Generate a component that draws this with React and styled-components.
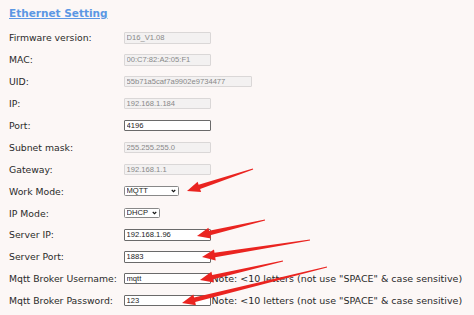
import React from 'react'
import styled, {createGlobalStyle} from 'styled-components'

const GlobalStyle = createGlobalStyle`
	html, body {
		margin: 0;
		padding: 0;
		background: #fcf7f6;
	}
	body {
		font-family: 'DejaVu Sans', Verdana, sans-serif;
		color: #2a2a2a;
	}
`

// Page

const Page = styled.div`
	position: relative;
	width: 474px;
	height: 315px;
	overflow: hidden;
	padding: 6px 0 0 9px;
	box-sizing: border-box;
`

const Title = styled.div`
	font-size: 10.5px;
	font-weight: bold;
	color: #5b97e4;
	text-decoration: underline;
	line-height: 14px;
	margin-bottom: 7px;
`

// Rows

const Form = styled.div`
	display: flex;
	flex-direction: column;
`

const Row = styled.div`
	display: flex;
	align-items: center;
	height: 21.9px;
`

const Label = styled.div`
	width: 114.5px;
	font-size: 9.3px;
	white-space: nowrap;
`

const Field = styled.input`
	box-sizing: border-box;
	width: ${p => p.w || 87}px;
	height: 11.5px;
	margin: 0;
	padding: 0 2px;
	font-family: 'Liberation Sans', Arial, sans-serif;
	font-size: 7.6px;
	border: 1px solid ${p => (p.readOnly ? '#dad7d7' : '#6a6a6a')};
	border-radius: 1px;
	background: ${p => (p.readOnly ? '#f3f1f1' : '#fff')};
	color: ${p => (p.readOnly ? '#888' : '#222')};
	outline: none;
`

const SelectWrap = styled.div`
	position: relative;
	display: inline-flex;
	width: ${p => p.w}px;
	height: 10.5px;
`

const Select = styled.select`
	appearance: none;
	box-sizing: border-box;
	width: 100%;
	height: 100%;
	margin: 0;
	padding: 0 0 0 2px;
	font-family: 'Liberation Sans', Arial, sans-serif;
	font-size: 7.6px;
	line-height: 8px;
	color: #222;
	border: 1px solid #888;
	border-radius: 1.5px;
	background: #fff;
	outline: none;
`

const Chevron = styled.svg`
	position: absolute;
	right: 3px;
	top: 3px;
	width: 5px;
	height: 4px;
	pointer-events: none;
`

const Note = styled.span`
	margin-left: 1px;
	font-size: 9.5px;
	white-space: nowrap;
`

// Arrows drawn over the form

const Overlay = styled.svg`
	position: absolute;
	left: 0;
	top: 0;
	width: 474px;
	height: 315px;
	pointer-events: none;
`

const arrows = [
	{tip: [187, 191], tail: [253, 169]},
	{tip: [197, 236], tail: [265, 220]},
	{tip: [202, 257], tail: [310, 240]},
	{tip: [200, 280], tail: [283, 261]},
	{tip: [182, 303], tail: [327, 267]},
]

function arrowPoints({tip, tail}) {
	const dx = tail[0] - tip[0]
	const dy = tail[1] - tip[1]
	const len = Math.hypot(dx, dy)
	const ux = dx / len
	const uy = dy / len
	const nx = -uy
	const ny = ux
	const head = 13
	const base = [tip[0] + ux * head, tip[1] + uy * head]
	const p = (pt, s) => `${(pt[0] + nx * s).toFixed(1)},${(pt[1] + ny * s).toFixed(1)}`
	return [
		`${tip[0]},${tip[1]}`,
		p(base, 5.5),
		p(base, 2.3),
		p(tail, 0.5),
		p(tail, -0.5),
		p(base, -2.3),
		p(base, -5.5),
	].join(' ')
}

const Drop = ({w, value}) => (
	<SelectWrap w={w}>
		<Select defaultValue={value}>
			<option>{value}</option>
		</Select>
		<Chevron viewBox="0 0 10 8">
			<path d="M1.5 2 L5 5.5 L8.5 2" fill="none" stroke="#111" strokeWidth="2.2" />
		</Chevron>
	</SelectWrap>
)

const NOTE = 'Note: <10 letters (not use "SPACE" & case sensitive)'

export default function App() {
	return (
		<Page>
			<GlobalStyle />
			<Title>Ethernet Setting</Title>
			<Form>
				<Row>
					<Label>Firmware version:</Label>
					<Field readOnly value="D16_V1.08" />
				</Row>
				<Row>
					<Label>MAC:</Label>
					<Field readOnly value="00:C7:82:A2:05:F1" />
				</Row>
				<Row>
					<Label>UID:</Label>
					<Field readOnly w={128} value="55b71a5caf7a9902e9734477" />
				</Row>
				<Row>
					<Label>IP:</Label>
					<Field readOnly value="192.168.1.184" />
				</Row>
				<Row>
					<Label>Port:</Label>
					<Field defaultValue="4196" />
				</Row>
				<Row>
					<Label>Subnet mask:</Label>
					<Field readOnly value="255.255.255.0" />
				</Row>
				<Row>
					<Label>Gateway:</Label>
					<Field readOnly value="192.168.1.1" />
				</Row>
				<Row>
					<Label>Work Mode:</Label>
					<Drop w={55} value="MQTT" />
				</Row>
				<Row>
					<Label>IP Mode:</Label>
					<Drop w={36} value="DHCP" />
				</Row>
				<Row>
					<Label>Server IP:</Label>
					<Field defaultValue="192.168.1.96" />
				</Row>
				<Row>
					<Label>Server Port:</Label>
					<Field defaultValue="1883" />
				</Row>
				<Row>
					<Label>Mqtt Broker Username:</Label>
					<Field defaultValue="mqtt" />
					<Note>{NOTE}</Note>
				</Row>
				<Row>
					<Label>Mqtt Broker Password:</Label>
					<Field defaultValue="123" />
					<Note>{NOTE}</Note>
				</Row>
			</Form>
			<Overlay viewBox="0 0 474 315">
				{arrows.map((a, i) => (
					<polygon key={i} points={arrowPoints(a)} fill="#ea2420" />
				))}
			</Overlay>
		</Page>
	)
}
